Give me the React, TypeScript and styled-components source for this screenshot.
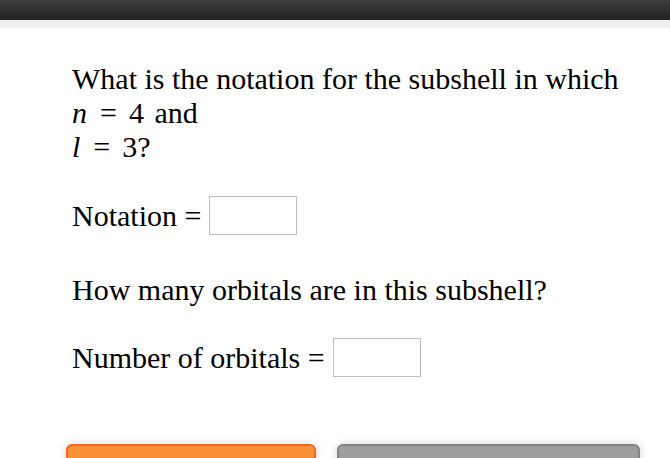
import React from 'react'
import styled, { createGlobalStyle } from 'styled-components'

const GlobalStyle = createGlobalStyle`
  html, body {
    margin: 0;
    padding: 0;
    background: #ffffff;
    overflow: hidden;
  }
`

const Page = styled.div`
  width: 670px;
  height: 458px;
  overflow: hidden;
  font-family: "Liberation Serif", "Times New Roman", serif;
  color: #000;
`

const TopBar = styled.div`
  height: 20px;
  background: linear-gradient(#3b3c3d, #232424);
`

const SubBar = styled.div`
  height: 8px;
  background: #f0f0f0;
`

const Content = styled.div`
  padding: 34px 0 0 72px;
`

const Question = styled.p<{ $top?: number }>`
  margin: ${p => p.$top ?? 0}px 0 0;
  font-size: 30px;
  line-height: 34px;
  white-space: nowrap;
`

const MathVar = styled.span`
  font-style: italic;
  font-family: "Liberation Serif", serif;
  margin-right: 1px;
`

const Eq = styled.span`
  margin: 0 12px;
`

const MathNum = styled.span`
  margin-right: 3px;
`

const AnswerRow = styled.div<{ $top: number }>`
  display: flex;
  align-items: center;
  margin-top: ${p => p.$top}px;
  font-size: 30px;
  height: 39px;
`

const Label = styled.span`
  margin-right: 8px;
`

const AnswerBox = styled.input`
  width: 88px;
  height: 39px;
  box-sizing: border-box;
  border: 1px solid #bdbdbd;
  background: #fff;
  margin: 0;
  padding: 0;
  outline: none;
`

const Buttons = styled.div`
  display: flex;
  gap: 21px;
  padding-left: 66px;
  margin-top: 67px;
`

const Button = styled.div<{ $color: string; $border: string; $width: number }>`
  width: ${p => p.$width}px;
  height: 40px;
  box-sizing: border-box;
  border-radius: 6px;
  background: ${p => p.$color};
  border: 2px solid ${p => p.$border};
  box-shadow: 0 0 8px rgba(0, 0, 0, 0.18);
`

export default function App() {
  return (
    <Page>
      <GlobalStyle />
      <TopBar />
      <SubBar />
      <Content>
        <Question>
          What is the notation for the subshell in which
          <br />
          <MathVar>n</MathVar>
          <Eq>=</Eq>
          <MathNum>4</MathNum> and
          <br />
          <MathVar>l</MathVar>
          <Eq>=</Eq>3?
        </Question>
        <AnswerRow $top={32}>
          <Label>Notation =</Label>
          <AnswerBox type="text" aria-label="Notation" />
        </AnswerRow>
        <Question $top={38}>How many orbitals are in this subshell?</Question>
        <AnswerRow $top={31}>
          <Label>Number of orbitals =</Label>
          <AnswerBox type="text" aria-label="Number of orbitals" />
        </AnswerRow>
      </Content>
      <Buttons>
        <Button $color="#fb9136" $border="#f26a1b" $width={250} />
        <Button $color="#9d9d9d" $border="#838383" $width={303} />
      </Buttons>
    </Page>
  )
}
